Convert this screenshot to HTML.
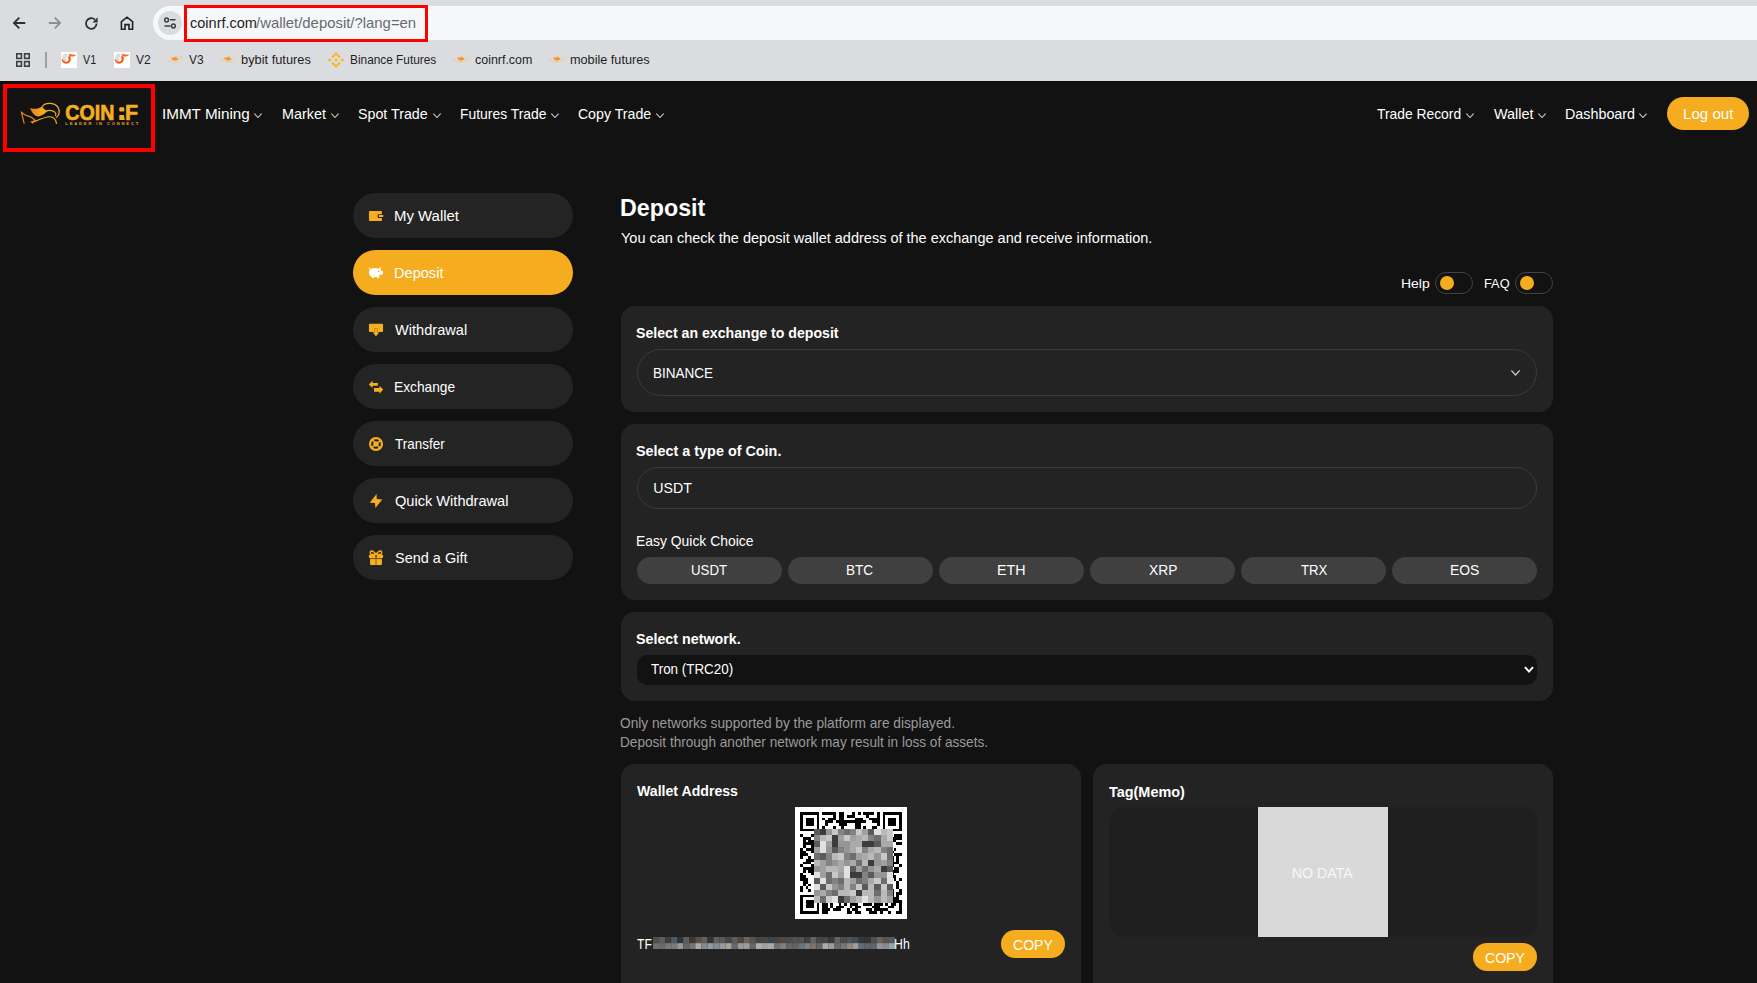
<!DOCTYPE html>
<html><head><meta charset="utf-8"><title>Deposit</title>
<style>
html,body{margin:0;padding:0;width:1757px;height:983px;overflow:hidden;background:#121212;}
body{position:relative;font-family:"Liberation Sans",sans-serif;}
.r{position:absolute;}
.t{position:absolute;white-space:nowrap;line-height:normal;transform-origin:0 0;}
svg{display:block}
</style></head><body>
<div class="r" style="left:0px;top:0px;width:1757px;height:81px;background:#dadce0;border-radius:0px;"></div>
<div class="r" style="left:0px;top:81px;width:1757px;height:1px;background:#0a0a0a;border-radius:0px;"></div>
<div class="r" style="left:153px;top:6px;width:1640px;height:34px;background:#f6f7f9;border-radius:17px;"></div>
<div class="r" style="left:158px;top:11px;width:24px;height:24px;background:#dadce0;border-radius:12px;"></div>
<svg class="r" style="left:158px;top:11px;" width="24" height="24" viewBox="0 0 24 24"><g fill="none" stroke="#3c4043" stroke-width="1.5"><circle cx="8.6" cy="9" r="1.9"/><circle cx="15.4" cy="15" r="1.9"/><path d="M12 8.7h5.5M6.5 15h6"/></g></svg>
<svg class="r" style="left:12px;top:16px;" width="14" height="14" viewBox="0 0 14 14"><path d="M13.3 7H2.2M7.3 1.6L1.9 7l5.4 5.4" fill="none" stroke="#2d3034" stroke-width="1.8"/></svg>
<svg class="r" style="left:48px;top:16px;" width="14" height="14" viewBox="0 0 14 14"><path d="M0.8 7H11.9M6.8 1.6L12.2 7l-5.4 5.4" fill="none" stroke="#8b8e93" stroke-width="1.8"/></svg>
<svg class="r" style="left:84px;top:16px;" width="15" height="15" viewBox="0 0 15 15"><path d="M12.6 7.6A5.3 5.3 0 1 1 10.9 3.6" fill="none" stroke="#2d3034" stroke-width="1.8"/><path d="M13.6 1.2V6.4H8.4z" fill="#2d3034"/></svg>
<svg class="r" style="left:120px;top:16px;" width="14" height="14" viewBox="0 0 14 14"><path d="M1.4 13.2V5.6L7 1.2l5.6 4.4v7.6H9V8.6H5v4.6z" fill="none" stroke="#202124" stroke-width="1.6" stroke-linejoin="miter"/></svg>
<div class="r" style="left:184px;top:5px;width:244px;height:37px;border:3.5px solid #ff0000;box-sizing:border-box"></div>
<div class="t" style="left:189.92px;top:15.00px;font-size:14.6px;color:#1f1f1f;transform:scaleX(0.9947);">coinrf.com</div>
<div class="t" style="left:256.30px;top:15.00px;font-size:14.6px;color:#676b70;transform:scaleX(1.0200);">/wallet/deposit/?lang=en</div>
<svg class="r" style="left:16px;top:53px;" width="14" height="14" viewBox="0 0 14 14"><g fill="none" stroke="#3c4043" stroke-width="1.6"><rect x="0.8" y="0.8" width="4.6" height="4.6"/><rect x="8.6" y="0.8" width="4.6" height="4.6"/><rect x="0.8" y="8.6" width="4.6" height="4.6"/><rect x="8.6" y="8.6" width="4.6" height="4.6"/></g></svg>
<div class="r" style="left:45px;top:52px;width:2px;height:16px;background:#9aa0a6;border-radius:0px;"></div>
<svg class="r" style="left:61px;top:52px;" width="16" height="16" viewBox="0 0 16 16"><rect width="16" height="16" fill="#fff"/><path d="M1.6 7.2A3.6 3.6 0 1 0 7.6 4.4" fill="none" stroke="#ff5214" stroke-width="2.1"/><path d="M4.6 1.2C2.4 1.6 1.2 3.6 1.4 6.2C1.8 8.6 3.6 9.8 5.6 9.2C4.6 8 4.2 6 6.4 4.2C6.6 2.6 5.8 1.4 4.6 1.2z" fill="#dcdcdc"/><path d="M7.4 1.8C9.6 2.2 11.6 3.4 15.2 2.4C14 4.4 11.6 5 8.6 4.4z" fill="#ff6414"/></svg>
<div class="t" style="left:82.75px;top:52.00px;font-size:13px;color:#1f1f1f;transform:scaleX(0.8284);">V1</div>
<svg class="r" style="left:114px;top:52px;" width="16" height="16" viewBox="0 0 16 16"><rect width="16" height="16" fill="#fff"/><path d="M1.6 7.2A3.6 3.6 0 1 0 7.6 4.4" fill="none" stroke="#ff5214" stroke-width="2.1"/><path d="M4.6 1.2C2.4 1.6 1.2 3.6 1.4 6.2C1.8 8.6 3.6 9.8 5.6 9.2C4.6 8 4.2 6 6.4 4.2C6.6 2.6 5.8 1.4 4.6 1.2z" fill="#dcdcdc"/><path d="M7.4 1.8C9.6 2.2 11.6 3.4 15.2 2.4C14 4.4 11.6 5 8.6 4.4z" fill="#ff6414"/></svg>
<div class="t" style="left:135.74px;top:52.00px;font-size:13px;color:#1f1f1f;transform:scaleX(0.9244);">V2</div>
<svg class="r" style="left:166px;top:52px;" width="17" height="16" viewBox="0 0 17 16"><path d="M5 5.6C6.8 6 8.6 5.6 10 4.6C10.4 5.8 11.6 6.6 13 7C11.4 8.2 9.4 9 7.6 8.6C6.4 8.2 5.6 7 5 5.6z" fill="#f39a26"/><path d="M10 4.6C11.6 3.4 14.4 3.6 15.4 5C16.2 6.4 15.6 8.2 14.8 9M1.4 6.4L2.8 10.4M3 8.8C5 9.4 7 9.8 8.2 10.2C10 10 12 9.4 14.2 9.6" fill="none" stroke="#f3c98e" stroke-width="0.9"/></svg>
<div class="t" style="left:188.54px;top:52.00px;font-size:13px;color:#1f1f1f;transform:scaleX(0.9165);">V3</div>
<svg class="r" style="left:219px;top:52px;" width="17" height="16" viewBox="0 0 17 16"><path d="M5 5.6C6.8 6 8.6 5.6 10 4.6C10.4 5.8 11.6 6.6 13 7C11.4 8.2 9.4 9 7.6 8.6C6.4 8.2 5.6 7 5 5.6z" fill="#f39a26"/><path d="M10 4.6C11.6 3.4 14.4 3.6 15.4 5C16.2 6.4 15.6 8.2 14.8 9M1.4 6.4L2.8 10.4M3 8.8C5 9.4 7 9.8 8.2 10.2C10 10 12 9.4 14.2 9.6" fill="none" stroke="#f3c98e" stroke-width="0.9"/></svg>
<div class="t" style="left:241.37px;top:52.00px;font-size:13px;color:#1f1f1f;transform:scaleX(0.9858);">bybit futures</div>
<svg class="r" style="left:322px;top:48px;" width="28" height="24" viewBox="0 0 1147 983"><g fill="#f5bb22"><path d="M575 160L770 355L705 420L575 290L445 420L380 355Z"/><path d="M575 820L770 625L705 560L575 690L445 560L380 625Z"/><path d="M310 415L385 490L310 565L235 490Z"/><path d="M575 415L650 490L575 565L500 490Z"/><path d="M835 415L910 490L835 565L760 490Z"/></g></svg>
<div class="t" style="left:349.65px;top:52.00px;font-size:13px;color:#1f1f1f;transform:scaleX(0.9115);">Binance Futures</div>
<svg class="r" style="left:452px;top:52px;" width="17" height="16" viewBox="0 0 17 16"><path d="M5 5.6C6.8 6 8.6 5.6 10 4.6C10.4 5.8 11.6 6.6 13 7C11.4 8.2 9.4 9 7.6 8.6C6.4 8.2 5.6 7 5 5.6z" fill="#f39a26"/><path d="M10 4.6C11.6 3.4 14.4 3.6 15.4 5C16.2 6.4 15.6 8.2 14.8 9M1.4 6.4L2.8 10.4M3 8.8C5 9.4 7 9.8 8.2 10.2C10 10 12 9.4 14.2 9.6" fill="none" stroke="#f3c98e" stroke-width="0.9"/></svg>
<div class="t" style="left:474.90px;top:52.00px;font-size:13px;color:#1f1f1f;transform:scaleX(0.9568);">coinrf.com</div>
<svg class="r" style="left:548px;top:52px;" width="17" height="16" viewBox="0 0 17 16"><path d="M5 5.6C6.8 6 8.6 5.6 10 4.6C10.4 5.8 11.6 6.6 13 7C11.4 8.2 9.4 9 7.6 8.6C6.4 8.2 5.6 7 5 5.6z" fill="#f39a26"/><path d="M10 4.6C11.6 3.4 14.4 3.6 15.4 5C16.2 6.4 15.6 8.2 14.8 9M1.4 6.4L2.8 10.4M3 8.8C5 9.4 7 9.8 8.2 10.2C10 10 12 9.4 14.2 9.6" fill="none" stroke="#f3c98e" stroke-width="0.9"/></svg>
<div class="t" style="left:570.38px;top:52.00px;font-size:13px;color:#1f1f1f;transform:scaleX(0.9746);">mobile futures</div>
<div class="r" style="left:3px;top:84px;width:152px;height:68px;border:4px solid #ff0000;box-sizing:border-box"></div>
<svg class="r" style="left:15px;top:98px;" width="60" height="32" viewBox="0 0 1757 937"><defs><linearGradient id="lg" x1="0" x2="1"><stop offset="0" stop-color="#ee7a28"/><stop offset="0.6" stop-color="#f3a522"/><stop offset="1" stop-color="#f5b01f"/></linearGradient></defs>
<path d="M440 290C560 340 690 320 800 240C820 300 870 355 960 380C870 450 760 560 640 535C560 510 490 420 440 290Z" fill="url(#lg)"/>
<path d="M800 250C850 170 950 150 1050 160C1250 180 1320 330 1290 450C1270 520 1230 560 1200 580" fill="none" stroke="#f2ac1e" stroke-width="38"/>
<path d="M900 390C1000 340 1150 370 1190 440C1200 470 1195 500 1185 525" fill="none" stroke="#f2ac1e" stroke-width="34"/>
<path d="M500 720C700 640 850 560 1000 550C1120 545 1200 620 1215 760" fill="none" stroke="#f2ac1e" stroke-width="34"/>
<path d="M270 750L190 420L300 500L470 560L600 660L480 700L540 740" fill="none" stroke="#ee8a25" stroke-width="34"/></svg>
<svg class="r" style="left:65px;top:101px;" width="75" height="26" viewBox="0 0 75 26"><g fill="#f5ae1f" stroke="#f5ae1f" stroke-width="0.7"><text x="0.3" y="18.8" font-family="Liberation Sans" font-weight="700" font-size="22.5" textLength="49" lengthAdjust="spacingAndGlyphs">COIN</text><text x="60" y="18.8" font-family="Liberation Sans" font-weight="700" font-size="22.5" textLength="13" lengthAdjust="spacingAndGlyphs">F</text></g><rect x="54.3" y="6.3" width="5" height="4.2" rx="1.2" fill="#f5ae1f"/><path d="M54.3 14h4.5l1 5h-5.5z" fill="#f5ae1f"/><text x="0.3" y="24.2" font-family="Liberation Sans" font-weight="700" font-size="4.2" fill="#e9a61f" textLength="73" lengthAdjust="spacing">LEADER IN CONNECT</text></svg>
<div class="t" style="left:162.13px;top:105.90px;font-size:14.2px;color:#fff;transform:scaleX(1.0742);">IMMT Mining</div>
<svg class="r" style="left:254px;top:112.8px;" width="8" height="5.5" viewBox="0 0 8 5.5"><path d="M0.4 0.5L4.0 4.5L7.6 0.5" fill="none" stroke="#c8c8c8" stroke-width="1.1"/></svg>
<div class="t" style="left:281.85px;top:105.90px;font-size:14.2px;color:#fff;transform:scaleX(1.0125);">Market</div>
<svg class="r" style="left:331px;top:112.8px;" width="8" height="5.5" viewBox="0 0 8 5.5"><path d="M0.4 0.5L4.0 4.5L7.6 0.5" fill="none" stroke="#c8c8c8" stroke-width="1.1"/></svg>
<div class="t" style="left:358.36px;top:105.90px;font-size:14.2px;color:#fff;transform:scaleX(1.0035);">Spot Trade</div>
<svg class="r" style="left:433px;top:112.8px;" width="8" height="5.5" viewBox="0 0 8 5.5"><path d="M0.4 0.5L4.0 4.5L7.6 0.5" fill="none" stroke="#c8c8c8" stroke-width="1.1"/></svg>
<div class="t" style="left:459.89px;top:105.90px;font-size:14.2px;color:#fff;transform:scaleX(0.9790);">Futures Trade</div>
<svg class="r" style="left:551px;top:112.8px;" width="8" height="5.5" viewBox="0 0 8 5.5"><path d="M0.4 0.5L4.0 4.5L7.6 0.5" fill="none" stroke="#c8c8c8" stroke-width="1.1"/></svg>
<div class="t" style="left:577.89px;top:105.90px;font-size:14.2px;color:#fff;">Copy Trade</div>
<svg class="r" style="left:656px;top:112.8px;" width="8" height="5.5" viewBox="0 0 8 5.5"><path d="M0.4 0.5L4.0 4.5L7.6 0.5" fill="none" stroke="#c8c8c8" stroke-width="1.1"/></svg>
<div class="t" style="left:1376.72px;top:105.90px;font-size:14.2px;color:#fff;transform:scaleX(0.9758);">Trade Record</div>
<svg class="r" style="left:1466px;top:112.8px;" width="8" height="5.5" viewBox="0 0 8 5.5"><path d="M0.4 0.5L4.0 4.5L7.6 0.5" fill="none" stroke="#c8c8c8" stroke-width="1.1"/></svg>
<div class="t" style="left:1493.53px;top:105.90px;font-size:14.2px;color:#fff;transform:scaleX(1.0164);">Wallet</div>
<svg class="r" style="left:1538px;top:112.8px;" width="8" height="5.5" viewBox="0 0 8 5.5"><path d="M0.4 0.5L4.0 4.5L7.6 0.5" fill="none" stroke="#c8c8c8" stroke-width="1.1"/></svg>
<div class="t" style="left:1564.85px;top:105.90px;font-size:14.2px;color:#fff;transform:scaleX(1.0092);">Dashboard</div>
<svg class="r" style="left:1639px;top:112.8px;" width="8" height="5.5" viewBox="0 0 8 5.5"><path d="M0.4 0.5L4.0 4.5L7.6 0.5" fill="none" stroke="#c8c8c8" stroke-width="1.1"/></svg>
<div class="r" style="left:1667px;top:97px;width:82px;height:33px;background:#f5ad1f;border-radius:16.5px;"></div>
<div class="t" style="left:1682.69px;top:105.90px;font-size:14.2px;color:#fff;transform:scaleX(1.0639);">Log out</div>
<div class="r" style="left:353px;top:193px;width:220px;height:45px;background:#242424;border-radius:22.5px;"></div>
<div class="t" style="left:394.11px;top:208.20px;font-size:14.3px;color:#fff;transform:scaleX(1.0444);">My Wallet</div>
<div class="r" style="left:353px;top:250px;width:220px;height:45px;background:#f5ad1f;border-radius:22.5px;"></div>
<div class="t" style="left:394.13px;top:265.20px;font-size:14.3px;color:#fff;transform:scaleX(1.0199);">Deposit</div>
<div class="r" style="left:353px;top:307px;width:220px;height:45px;background:#242424;border-radius:22.5px;"></div>
<div class="t" style="left:395.23px;top:322.20px;font-size:14.3px;color:#fff;transform:scaleX(1.0199);">Withdrawal</div>
<div class="r" style="left:353px;top:364px;width:220px;height:45px;background:#242424;border-radius:22.5px;"></div>
<div class="t" style="left:394.20px;top:379.20px;font-size:14.3px;color:#fff;transform:scaleX(0.9615);">Exchange</div>
<div class="r" style="left:353px;top:421px;width:220px;height:45px;background:#242424;border-radius:22.5px;"></div>
<div class="t" style="left:395.03px;top:436.20px;font-size:14.3px;color:#fff;transform:scaleX(0.9426);">Transfer</div>
<div class="r" style="left:353px;top:478px;width:220px;height:45px;background:#242424;border-radius:22.5px;"></div>
<div class="t" style="left:394.64px;top:493.20px;font-size:14.3px;color:#fff;transform:scaleX(1.0202);">Quick Withdrawal</div>
<div class="r" style="left:353px;top:535px;width:220px;height:45px;background:#242424;border-radius:22.5px;"></div>
<div class="t" style="left:394.65px;top:550.20px;font-size:14.3px;color:#fff;transform:scaleX(1.0129);">Send a Gift</div>
<svg class="r" style="left:362px;top:205px;" width="28" height="22" viewBox="0 0 1251 983"><rect x="310" y="265" width="580" height="450" rx="40" fill="#f5ae1f"/><rect x="700" y="410" width="260" height="170" rx="40" fill="#242424"/><rect x="750" y="450" width="200" height="90" rx="20" fill="#f5ae1f"/></svg>
<svg class="r" style="left:362px;top:262px;" width="28" height="22" viewBox="0 0 1251 983"><g fill="#fff"><ellipse cx="565" cy="480" rx="255" ry="215"/><path d="M700 300L845 240L835 400L740 420Z"/><rect x="790" y="390" width="150" height="180" rx="55"/><path d="M410 600L545 620L530 720L455 715Z"/><path d="M650 610L775 590L760 740L690 720Z"/><path d="M315 265C345 245 375 290 370 350C335 355 300 315 315 265Z"/></g><path d="M545 690C590 670 640 670 680 690L680 760L545 760Z" fill="#f5ad1f"/><circle cx="735" cy="425" r="36" fill="#f5ad1f"/></svg>
<svg class="r" style="left:362px;top:319px;" width="28" height="22" viewBox="0 0 1251 983"><rect x="310" y="210" width="630" height="370" rx="40" fill="#f5ae1f"/><path d="M560 440h130v160h75L625 770 485 600h75z" fill="#f5ae1f" stroke="#5a4519" stroke-width="28" paint-order="stroke"/></svg>
<svg class="r" style="left:362px;top:376px;" width="28" height="22" viewBox="0 0 1251 983"><path d="M305 375L470 215V310H710V440H470V540z" fill="#f5ae1f"/><path d="M945 600L785 440V540H535V700H785V790z" fill="#f5ae1f" stroke="#242424" stroke-width="30" paint-order="stroke"/></svg>
<svg class="r" style="left:362px;top:433px;" width="28" height="22" viewBox="0 0 1251 983"><circle cx="625" cy="490" r="315" fill="#f5ae1f"/><circle cx="625" cy="490" r="170" fill="none" stroke="#242424" stroke-width="90" stroke-dasharray="200 67" stroke-dashoffset="100"/></svg>
<svg class="r" style="left:362px;top:490px;" width="28" height="22" viewBox="0 0 1251 983"><path d="M650 175L345 565L580 585L600 800L905 420L660 400z" fill="#f5ae1f" stroke-linejoin="round"/></svg>
<svg class="r" style="left:362px;top:547px;" width="28" height="22" viewBox="0 0 1251 983"><path d="M625 330C560 240 500 180 430 180C370 180 350 250 390 300C420 335 500 340 625 330C750 340 830 335 860 300C900 250 880 180 820 180C750 180 690 240 625 330Z" fill="none" stroke="#f5ae1f" stroke-width="60"/><rect x="310" y="340" width="630" height="160" rx="40" fill="#f5ae1f"/><rect x="360" y="530" width="530" height="275" rx="30" fill="#f5ae1f"/><rect x="600" y="360" width="55" height="110" fill="#242424"/><rect x="595" y="500" width="62" height="305" fill="#8a6a25" opacity="0.7"/><rect x="360" y="500" width="530" height="40" fill="#6b5527" opacity="0.8"/></svg>
<div class="t" style="left:619.99px;top:194.30px;font-size:24.5px;color:#fff;font-weight:700;transform:scaleX(0.9493);">Deposit</div>
<div class="t" style="left:620.64px;top:229.40px;font-size:15.2px;color:#fff;transform:scaleX(0.9544);">You can check the deposit wallet address of the exchange and receive information.</div>
<div class="t" style="left:1400.58px;top:276.00px;font-size:13px;color:#fff;transform:scaleX(1.0733);">Help</div>
<div class="r" style="left:1435px;top:272px;width:38px;height:21.5px;background:transparent;border-radius:11px;border:1px solid #424242;box-sizing:border-box"></div>
<div class="r" style="left:1439.5px;top:275.8px;width:14.5px;height:14.5px;background:#f5ad1f;border-radius:7.25px;"></div>
<div class="t" style="left:1483.98px;top:276.00px;font-size:13px;color:#fff;transform:scaleX(0.9846);">FAQ</div>
<div class="r" style="left:1515px;top:272px;width:38px;height:21.5px;background:transparent;border-radius:11px;border:1px solid #424242;box-sizing:border-box"></div>
<div class="r" style="left:1519.5px;top:275.8px;width:14.5px;height:14.5px;background:#f5ad1f;border-radius:7.25px;"></div>
<div class="r" style="left:621px;top:306px;width:932px;height:106px;background:#232323;border-radius:14px;"></div>
<div class="t" style="left:636.48px;top:325.20px;font-size:14.8px;color:#fff;font-weight:700;transform:scaleX(0.9548);">Select an exchange to deposit</div>
<div class="r" style="left:637px;top:349px;width:900px;height:47px;background:transparent;border-radius:23.5px;border:1px solid #3a3a3a;box-sizing:border-box"></div>
<div class="t" style="left:653.32px;top:365.90px;font-size:13.8px;color:#fff;transform:scaleX(0.9801);">BINANCE</div>
<svg class="r" style="left:1511px;top:369.9px;" width="9" height="6" viewBox="0 0 9 6"><path d="M0.4 0.5L4.5 5L8.6 0.5" fill="none" stroke="#c8c8c8" stroke-width="1.2"/></svg>
<div class="r" style="left:621px;top:424px;width:932px;height:176px;background:#232323;border-radius:14px;"></div>
<div class="t" style="left:636.07px;top:443.30px;font-size:14.8px;color:#fff;font-weight:700;transform:scaleX(0.9715);">Select a type of Coin.</div>
<div class="r" style="left:637px;top:467px;width:900px;height:42px;background:transparent;border-radius:21px;border:1px solid #3a3a3a;box-sizing:border-box"></div>
<div class="t" style="left:653.34px;top:479.90px;font-size:14.2px;color:#fff;">USDT</div>
<div class="t" style="left:636.49px;top:532.90px;font-size:14.3px;color:#fff;transform:scaleX(0.9725);">Easy Quick Choice</div>
<div class="r" style="left:637px;top:557px;width:145px;height:27px;background:#404040;border-radius:13.5px;"></div>
<div class="t" style="left:691.21px;top:562.30px;font-size:14.6px;color:#fff;transform:scaleX(0.9080);">USDT</div>
<div class="r" style="left:788px;top:557px;width:145px;height:27px;background:#404040;border-radius:13.5px;"></div>
<div class="t" style="left:846.41px;top:562.30px;font-size:14.6px;color:#fff;transform:scaleX(0.9302);">BTC</div>
<div class="r" style="left:939px;top:557px;width:145px;height:27px;background:#404040;border-radius:13.5px;"></div>
<div class="t" style="left:997.06px;top:562.30px;font-size:14.6px;color:#fff;transform:scaleX(0.9790);">ETH</div>
<div class="r" style="left:1090px;top:557px;width:145px;height:27px;background:#404040;border-radius:13.5px;"></div>
<div class="t" style="left:1148.56px;top:562.30px;font-size:14.6px;color:#fff;transform:scaleX(0.9444);">XRP</div>
<div class="r" style="left:1241px;top:557px;width:145px;height:27px;background:#404040;border-radius:13.5px;"></div>
<div class="t" style="left:1300.54px;top:562.30px;font-size:14.6px;color:#fff;transform:scaleX(0.9051);">TRX</div>
<div class="r" style="left:1392px;top:557px;width:145px;height:27px;background:#404040;border-radius:13.5px;"></div>
<div class="t" style="left:1449.69px;top:562.30px;font-size:14.6px;color:#fff;transform:scaleX(0.9523);">EOS</div>
<div class="r" style="left:621px;top:612px;width:932px;height:89px;background:#232323;border-radius:14px;"></div>
<div class="t" style="left:636.07px;top:631.20px;font-size:14.8px;color:#fff;font-weight:700;transform:scaleX(0.9641);">Select network.</div>
<div class="r" style="left:637px;top:655px;width:900px;height:30px;background:#121212;border-radius:10px;"></div>
<div class="t" style="left:651.03px;top:661.30px;font-size:14.3px;color:#fff;transform:scaleX(0.9374);">Tron (TRC20)</div>
<svg class="r" style="left:1524px;top:666px;" width="10" height="8" viewBox="0 0 10 8"><path d="M1 1.2L5 5.6L9 1.2" fill="none" stroke="#fff" stroke-width="2"/></svg>
<div class="t" style="left:620.38px;top:715.20px;font-size:14.2px;color:#9a9a9a;transform:scaleX(0.9654);">Only networks supported by the platform are displayed.</div>
<div class="t" style="left:619.91px;top:734.00px;font-size:14.2px;color:#9a9a9a;transform:scaleX(0.9583);">Deposit through another network may result in loss of assets.</div>
<div class="r" style="left:621px;top:764px;width:460px;height:240px;background:#232323;border-radius:14px;"></div>
<div class="t" style="left:637.00px;top:783.00px;font-size:14.8px;color:#fff;font-weight:700;transform:scaleX(0.9541);">Wallet Address</div>
<svg class="r" style="left:795px;top:807px;" width="112" height="112" viewBox="0 0 112 112"><rect width="112" height="112" fill="#fff"/><g transform="translate(5,5) scale(2.75)" fill="#000" shape-rendering="crispEdges"><rect x="0" y="0" width="1" height="1"/><rect x="1" y="0" width="1" height="1"/><rect x="2" y="0" width="1" height="1"/><rect x="3" y="0" width="1" height="1"/><rect x="4" y="0" width="1" height="1"/><rect x="5" y="0" width="1" height="1"/><rect x="6" y="0" width="1" height="1"/><rect x="8" y="0" width="1" height="1"/><rect x="9" y="0" width="1" height="1"/><rect x="10" y="0" width="1" height="1"/><rect x="11" y="0" width="1" height="1"/><rect x="12" y="0" width="1" height="1"/><rect x="14" y="0" width="1" height="1"/><rect x="15" y="0" width="1" height="1"/><rect x="19" y="0" width="1" height="1"/><rect x="21" y="0" width="1" height="1"/><rect x="23" y="0" width="1" height="1"/><rect x="24" y="0" width="1" height="1"/><rect x="25" y="0" width="1" height="1"/><rect x="26" y="0" width="1" height="1"/><rect x="28" y="0" width="1" height="1"/><rect x="30" y="0" width="1" height="1"/><rect x="31" y="0" width="1" height="1"/><rect x="32" y="0" width="1" height="1"/><rect x="33" y="0" width="1" height="1"/><rect x="34" y="0" width="1" height="1"/><rect x="35" y="0" width="1" height="1"/><rect x="36" y="0" width="1" height="1"/><rect x="0" y="1" width="1" height="1"/><rect x="6" y="1" width="1" height="1"/><rect x="12" y="1" width="1" height="1"/><rect x="14" y="1" width="1" height="1"/><rect x="15" y="1" width="1" height="1"/><rect x="17" y="1" width="1" height="1"/><rect x="18" y="1" width="1" height="1"/><rect x="19" y="1" width="1" height="1"/><rect x="24" y="1" width="1" height="1"/><rect x="28" y="1" width="1" height="1"/><rect x="30" y="1" width="1" height="1"/><rect x="36" y="1" width="1" height="1"/><rect x="0" y="2" width="1" height="1"/><rect x="2" y="2" width="1" height="1"/><rect x="3" y="2" width="1" height="1"/><rect x="4" y="2" width="1" height="1"/><rect x="6" y="2" width="1" height="1"/><rect x="8" y="2" width="1" height="1"/><rect x="10" y="2" width="1" height="1"/><rect x="11" y="2" width="1" height="1"/><rect x="12" y="2" width="1" height="1"/><rect x="14" y="2" width="1" height="1"/><rect x="15" y="2" width="1" height="1"/><rect x="20" y="2" width="1" height="1"/><rect x="21" y="2" width="1" height="1"/><rect x="22" y="2" width="1" height="1"/><rect x="25" y="2" width="1" height="1"/><rect x="26" y="2" width="1" height="1"/><rect x="27" y="2" width="1" height="1"/><rect x="28" y="2" width="1" height="1"/><rect x="30" y="2" width="1" height="1"/><rect x="32" y="2" width="1" height="1"/><rect x="33" y="2" width="1" height="1"/><rect x="34" y="2" width="1" height="1"/><rect x="36" y="2" width="1" height="1"/><rect x="0" y="3" width="1" height="1"/><rect x="2" y="3" width="1" height="1"/><rect x="3" y="3" width="1" height="1"/><rect x="4" y="3" width="1" height="1"/><rect x="6" y="3" width="1" height="1"/><rect x="9" y="3" width="1" height="1"/><rect x="10" y="3" width="1" height="1"/><rect x="11" y="3" width="1" height="1"/><rect x="13" y="3" width="1" height="1"/><rect x="14" y="3" width="1" height="1"/><rect x="15" y="3" width="1" height="1"/><rect x="16" y="3" width="1" height="1"/><rect x="17" y="3" width="1" height="1"/><rect x="18" y="3" width="1" height="1"/><rect x="19" y="3" width="1" height="1"/><rect x="20" y="3" width="1" height="1"/><rect x="21" y="3" width="1" height="1"/><rect x="22" y="3" width="1" height="1"/><rect x="23" y="3" width="1" height="1"/><rect x="26" y="3" width="1" height="1"/><rect x="27" y="3" width="1" height="1"/><rect x="28" y="3" width="1" height="1"/><rect x="30" y="3" width="1" height="1"/><rect x="32" y="3" width="1" height="1"/><rect x="33" y="3" width="1" height="1"/><rect x="34" y="3" width="1" height="1"/><rect x="36" y="3" width="1" height="1"/><rect x="0" y="4" width="1" height="1"/><rect x="2" y="4" width="1" height="1"/><rect x="3" y="4" width="1" height="1"/><rect x="4" y="4" width="1" height="1"/><rect x="6" y="4" width="1" height="1"/><rect x="9" y="4" width="1" height="1"/><rect x="14" y="4" width="1" height="1"/><rect x="15" y="4" width="1" height="1"/><rect x="16" y="4" width="1" height="1"/><rect x="20" y="4" width="1" height="1"/><rect x="21" y="4" width="1" height="1"/><rect x="28" y="4" width="1" height="1"/><rect x="30" y="4" width="1" height="1"/><rect x="32" y="4" width="1" height="1"/><rect x="33" y="4" width="1" height="1"/><rect x="34" y="4" width="1" height="1"/><rect x="36" y="4" width="1" height="1"/><rect x="0" y="5" width="1" height="1"/><rect x="6" y="5" width="1" height="1"/><rect x="8" y="5" width="1" height="1"/><rect x="12" y="5" width="1" height="1"/><rect x="15" y="5" width="1" height="1"/><rect x="20" y="5" width="1" height="1"/><rect x="21" y="5" width="1" height="1"/><rect x="23" y="5" width="1" height="1"/><rect x="26" y="5" width="1" height="1"/><rect x="27" y="5" width="1" height="1"/><rect x="30" y="5" width="1" height="1"/><rect x="36" y="5" width="1" height="1"/><rect x="0" y="6" width="1" height="1"/><rect x="1" y="6" width="1" height="1"/><rect x="2" y="6" width="1" height="1"/><rect x="3" y="6" width="1" height="1"/><rect x="4" y="6" width="1" height="1"/><rect x="5" y="6" width="1" height="1"/><rect x="6" y="6" width="1" height="1"/><rect x="10" y="6" width="1" height="1"/><rect x="13" y="6" width="1" height="1"/><rect x="14" y="6" width="1" height="1"/><rect x="15" y="6" width="1" height="1"/><rect x="16" y="6" width="1" height="1"/><rect x="18" y="6" width="1" height="1"/><rect x="19" y="6" width="1" height="1"/><rect x="20" y="6" width="1" height="1"/><rect x="22" y="6" width="1" height="1"/><rect x="23" y="6" width="1" height="1"/><rect x="26" y="6" width="1" height="1"/><rect x="30" y="6" width="1" height="1"/><rect x="31" y="6" width="1" height="1"/><rect x="32" y="6" width="1" height="1"/><rect x="33" y="6" width="1" height="1"/><rect x="34" y="6" width="1" height="1"/><rect x="35" y="6" width="1" height="1"/><rect x="36" y="6" width="1" height="1"/><rect x="9" y="7" width="1" height="1"/><rect x="10" y="7" width="1" height="1"/><rect x="16" y="7" width="1" height="1"/><rect x="21" y="7" width="1" height="1"/><rect x="23" y="7" width="1" height="1"/><rect x="28" y="7" width="1" height="1"/><rect x="0" y="8" width="1" height="1"/><rect x="4" y="8" width="1" height="1"/><rect x="7" y="8" width="1" height="1"/><rect x="10" y="8" width="1" height="1"/><rect x="12" y="8" width="1" height="1"/><rect x="13" y="8" width="1" height="1"/><rect x="16" y="8" width="1" height="1"/><rect x="17" y="8" width="1" height="1"/><rect x="19" y="8" width="1" height="1"/><rect x="20" y="8" width="1" height="1"/><rect x="21" y="8" width="1" height="1"/><rect x="23" y="8" width="1" height="1"/><rect x="25" y="8" width="1" height="1"/><rect x="26" y="8" width="1" height="1"/><rect x="27" y="8" width="1" height="1"/><rect x="30" y="8" width="1" height="1"/><rect x="34" y="8" width="1" height="1"/><rect x="35" y="8" width="1" height="1"/><rect x="36" y="8" width="1" height="1"/><rect x="1" y="9" width="1" height="1"/><rect x="2" y="9" width="1" height="1"/><rect x="3" y="9" width="1" height="1"/><rect x="6" y="9" width="1" height="1"/><rect x="7" y="9" width="1" height="1"/><rect x="11" y="9" width="1" height="1"/><rect x="12" y="9" width="1" height="1"/><rect x="14" y="9" width="1" height="1"/><rect x="15" y="9" width="1" height="1"/><rect x="19" y="9" width="1" height="1"/><rect x="21" y="9" width="1" height="1"/><rect x="23" y="9" width="1" height="1"/><rect x="24" y="9" width="1" height="1"/><rect x="27" y="9" width="1" height="1"/><rect x="28" y="9" width="1" height="1"/><rect x="30" y="9" width="1" height="1"/><rect x="31" y="9" width="1" height="1"/><rect x="32" y="9" width="1" height="1"/><rect x="33" y="9" width="1" height="1"/><rect x="34" y="9" width="1" height="1"/><rect x="35" y="9" width="1" height="1"/><rect x="36" y="9" width="1" height="1"/><rect x="1" y="10" width="1" height="1"/><rect x="3" y="10" width="1" height="1"/><rect x="4" y="10" width="1" height="1"/><rect x="5" y="10" width="1" height="1"/><rect x="6" y="10" width="1" height="1"/><rect x="7" y="10" width="1" height="1"/><rect x="10" y="10" width="1" height="1"/><rect x="11" y="10" width="1" height="1"/><rect x="13" y="10" width="1" height="1"/><rect x="15" y="10" width="1" height="1"/><rect x="16" y="10" width="1" height="1"/><rect x="18" y="10" width="1" height="1"/><rect x="22" y="10" width="1" height="1"/><rect x="26" y="10" width="1" height="1"/><rect x="27" y="10" width="1" height="1"/><rect x="28" y="10" width="1" height="1"/><rect x="29" y="10" width="1" height="1"/><rect x="30" y="10" width="1" height="1"/><rect x="32" y="10" width="1" height="1"/><rect x="33" y="10" width="1" height="1"/><rect x="34" y="10" width="1" height="1"/><rect x="1" y="11" width="1" height="1"/><rect x="2" y="11" width="1" height="1"/><rect x="3" y="11" width="1" height="1"/><rect x="4" y="11" width="1" height="1"/><rect x="5" y="11" width="1" height="1"/><rect x="6" y="11" width="1" height="1"/><rect x="7" y="11" width="1" height="1"/><rect x="11" y="11" width="1" height="1"/><rect x="13" y="11" width="1" height="1"/><rect x="14" y="11" width="1" height="1"/><rect x="15" y="11" width="1" height="1"/><rect x="16" y="11" width="1" height="1"/><rect x="17" y="11" width="1" height="1"/><rect x="19" y="11" width="1" height="1"/><rect x="21" y="11" width="1" height="1"/><rect x="22" y="11" width="1" height="1"/><rect x="23" y="11" width="1" height="1"/><rect x="24" y="11" width="1" height="1"/><rect x="25" y="11" width="1" height="1"/><rect x="26" y="11" width="1" height="1"/><rect x="27" y="11" width="1" height="1"/><rect x="28" y="11" width="1" height="1"/><rect x="35" y="11" width="1" height="1"/><rect x="36" y="11" width="1" height="1"/><rect x="1" y="12" width="1" height="1"/><rect x="4" y="12" width="1" height="1"/><rect x="10" y="12" width="1" height="1"/><rect x="20" y="12" width="1" height="1"/><rect x="21" y="12" width="1" height="1"/><rect x="22" y="12" width="1" height="1"/><rect x="23" y="12" width="1" height="1"/><rect x="24" y="12" width="1" height="1"/><rect x="30" y="12" width="1" height="1"/><rect x="31" y="12" width="1" height="1"/><rect x="0" y="13" width="1" height="1"/><rect x="2" y="13" width="1" height="1"/><rect x="3" y="13" width="1" height="1"/><rect x="4" y="13" width="1" height="1"/><rect x="6" y="13" width="1" height="1"/><rect x="9" y="13" width="1" height="1"/><rect x="10" y="13" width="1" height="1"/><rect x="11" y="13" width="1" height="1"/><rect x="16" y="13" width="1" height="1"/><rect x="17" y="13" width="1" height="1"/><rect x="18" y="13" width="1" height="1"/><rect x="20" y="13" width="1" height="1"/><rect x="22" y="13" width="1" height="1"/><rect x="23" y="13" width="1" height="1"/><rect x="24" y="13" width="1" height="1"/><rect x="28" y="13" width="1" height="1"/><rect x="30" y="13" width="1" height="1"/><rect x="31" y="13" width="1" height="1"/><rect x="32" y="13" width="1" height="1"/><rect x="34" y="13" width="1" height="1"/><rect x="0" y="14" width="1" height="1"/><rect x="1" y="14" width="1" height="1"/><rect x="4" y="14" width="1" height="1"/><rect x="5" y="14" width="1" height="1"/><rect x="6" y="14" width="1" height="1"/><rect x="8" y="14" width="1" height="1"/><rect x="10" y="14" width="1" height="1"/><rect x="13" y="14" width="1" height="1"/><rect x="18" y="14" width="1" height="1"/><rect x="20" y="14" width="1" height="1"/><rect x="21" y="14" width="1" height="1"/><rect x="22" y="14" width="1" height="1"/><rect x="23" y="14" width="1" height="1"/><rect x="24" y="14" width="1" height="1"/><rect x="25" y="14" width="1" height="1"/><rect x="26" y="14" width="1" height="1"/><rect x="27" y="14" width="1" height="1"/><rect x="28" y="14" width="1" height="1"/><rect x="30" y="14" width="1" height="1"/><rect x="33" y="14" width="1" height="1"/><rect x="0" y="15" width="1" height="1"/><rect x="1" y="15" width="1" height="1"/><rect x="2" y="15" width="1" height="1"/><rect x="5" y="15" width="1" height="1"/><rect x="6" y="15" width="1" height="1"/><rect x="7" y="15" width="1" height="1"/><rect x="8" y="15" width="1" height="1"/><rect x="9" y="15" width="1" height="1"/><rect x="11" y="15" width="1" height="1"/><rect x="13" y="15" width="1" height="1"/><rect x="14" y="15" width="1" height="1"/><rect x="16" y="15" width="1" height="1"/><rect x="17" y="15" width="1" height="1"/><rect x="26" y="15" width="1" height="1"/><rect x="28" y="15" width="1" height="1"/><rect x="31" y="15" width="1" height="1"/><rect x="32" y="15" width="1" height="1"/><rect x="34" y="15" width="1" height="1"/><rect x="35" y="15" width="1" height="1"/><rect x="36" y="15" width="1" height="1"/><rect x="0" y="16" width="1" height="1"/><rect x="3" y="16" width="1" height="1"/><rect x="5" y="16" width="1" height="1"/><rect x="7" y="16" width="1" height="1"/><rect x="8" y="16" width="1" height="1"/><rect x="9" y="16" width="1" height="1"/><rect x="10" y="16" width="1" height="1"/><rect x="12" y="16" width="1" height="1"/><rect x="13" y="16" width="1" height="1"/><rect x="16" y="16" width="1" height="1"/><rect x="17" y="16" width="1" height="1"/><rect x="18" y="16" width="1" height="1"/><rect x="19" y="16" width="1" height="1"/><rect x="20" y="16" width="1" height="1"/><rect x="21" y="16" width="1" height="1"/><rect x="22" y="16" width="1" height="1"/><rect x="23" y="16" width="1" height="1"/><rect x="27" y="16" width="1" height="1"/><rect x="28" y="16" width="1" height="1"/><rect x="30" y="16" width="1" height="1"/><rect x="31" y="16" width="1" height="1"/><rect x="32" y="16" width="1" height="1"/><rect x="33" y="16" width="1" height="1"/><rect x="35" y="16" width="1" height="1"/><rect x="2" y="17" width="1" height="1"/><rect x="3" y="17" width="1" height="1"/><rect x="4" y="17" width="1" height="1"/><rect x="5" y="17" width="1" height="1"/><rect x="6" y="17" width="1" height="1"/><rect x="10" y="17" width="1" height="1"/><rect x="11" y="17" width="1" height="1"/><rect x="14" y="17" width="1" height="1"/><rect x="16" y="17" width="1" height="1"/><rect x="17" y="17" width="1" height="1"/><rect x="22" y="17" width="1" height="1"/><rect x="23" y="17" width="1" height="1"/><rect x="24" y="17" width="1" height="1"/><rect x="31" y="17" width="1" height="1"/><rect x="33" y="17" width="1" height="1"/><rect x="35" y="17" width="1" height="1"/><rect x="1" y="18" width="1" height="1"/><rect x="2" y="18" width="1" height="1"/><rect x="3" y="18" width="1" height="1"/><rect x="6" y="18" width="1" height="1"/><rect x="7" y="18" width="1" height="1"/><rect x="10" y="18" width="1" height="1"/><rect x="11" y="18" width="1" height="1"/><rect x="13" y="18" width="1" height="1"/><rect x="14" y="18" width="1" height="1"/><rect x="15" y="18" width="1" height="1"/><rect x="19" y="18" width="1" height="1"/><rect x="20" y="18" width="1" height="1"/><rect x="21" y="18" width="1" height="1"/><rect x="24" y="18" width="1" height="1"/><rect x="25" y="18" width="1" height="1"/><rect x="26" y="18" width="1" height="1"/><rect x="28" y="18" width="1" height="1"/><rect x="29" y="18" width="1" height="1"/><rect x="32" y="18" width="1" height="1"/><rect x="33" y="18" width="1" height="1"/><rect x="34" y="18" width="1" height="1"/><rect x="35" y="18" width="1" height="1"/><rect x="0" y="19" width="1" height="1"/><rect x="4" y="19" width="1" height="1"/><rect x="6" y="19" width="1" height="1"/><rect x="8" y="19" width="1" height="1"/><rect x="9" y="19" width="1" height="1"/><rect x="11" y="19" width="1" height="1"/><rect x="13" y="19" width="1" height="1"/><rect x="14" y="19" width="1" height="1"/><rect x="15" y="19" width="1" height="1"/><rect x="16" y="19" width="1" height="1"/><rect x="19" y="19" width="1" height="1"/><rect x="20" y="19" width="1" height="1"/><rect x="21" y="19" width="1" height="1"/><rect x="23" y="19" width="1" height="1"/><rect x="24" y="19" width="1" height="1"/><rect x="25" y="19" width="1" height="1"/><rect x="26" y="19" width="1" height="1"/><rect x="32" y="19" width="1" height="1"/><rect x="33" y="19" width="1" height="1"/><rect x="36" y="19" width="1" height="1"/><rect x="1" y="20" width="1" height="1"/><rect x="2" y="20" width="1" height="1"/><rect x="3" y="20" width="1" height="1"/><rect x="4" y="20" width="1" height="1"/><rect x="5" y="20" width="1" height="1"/><rect x="6" y="20" width="1" height="1"/><rect x="7" y="20" width="1" height="1"/><rect x="9" y="20" width="1" height="1"/><rect x="11" y="20" width="1" height="1"/><rect x="12" y="20" width="1" height="1"/><rect x="15" y="20" width="1" height="1"/><rect x="16" y="20" width="1" height="1"/><rect x="17" y="20" width="1" height="1"/><rect x="18" y="20" width="1" height="1"/><rect x="20" y="20" width="1" height="1"/><rect x="21" y="20" width="1" height="1"/><rect x="23" y="20" width="1" height="1"/><rect x="24" y="20" width="1" height="1"/><rect x="27" y="20" width="1" height="1"/><rect x="28" y="20" width="1" height="1"/><rect x="29" y="20" width="1" height="1"/><rect x="31" y="20" width="1" height="1"/><rect x="34" y="20" width="1" height="1"/><rect x="35" y="20" width="1" height="1"/><rect x="1" y="21" width="1" height="1"/><rect x="3" y="21" width="1" height="1"/><rect x="4" y="21" width="1" height="1"/><rect x="5" y="21" width="1" height="1"/><rect x="10" y="21" width="1" height="1"/><rect x="11" y="21" width="1" height="1"/><rect x="12" y="21" width="1" height="1"/><rect x="15" y="21" width="1" height="1"/><rect x="16" y="21" width="1" height="1"/><rect x="17" y="21" width="1" height="1"/><rect x="18" y="21" width="1" height="1"/><rect x="20" y="21" width="1" height="1"/><rect x="26" y="21" width="1" height="1"/><rect x="27" y="21" width="1" height="1"/><rect x="28" y="21" width="1" height="1"/><rect x="30" y="21" width="1" height="1"/><rect x="31" y="21" width="1" height="1"/><rect x="33" y="21" width="1" height="1"/><rect x="34" y="21" width="1" height="1"/><rect x="35" y="21" width="1" height="1"/><rect x="0" y="22" width="1" height="1"/><rect x="4" y="22" width="1" height="1"/><rect x="5" y="22" width="1" height="1"/><rect x="6" y="22" width="1" height="1"/><rect x="7" y="22" width="1" height="1"/><rect x="9" y="22" width="1" height="1"/><rect x="10" y="22" width="1" height="1"/><rect x="11" y="22" width="1" height="1"/><rect x="17" y="22" width="1" height="1"/><rect x="19" y="22" width="1" height="1"/><rect x="21" y="22" width="1" height="1"/><rect x="23" y="22" width="1" height="1"/><rect x="24" y="22" width="1" height="1"/><rect x="25" y="22" width="1" height="1"/><rect x="26" y="22" width="1" height="1"/><rect x="29" y="22" width="1" height="1"/><rect x="30" y="22" width="1" height="1"/><rect x="33" y="22" width="1" height="1"/><rect x="0" y="23" width="1" height="1"/><rect x="1" y="23" width="1" height="1"/><rect x="5" y="23" width="1" height="1"/><rect x="6" y="23" width="1" height="1"/><rect x="7" y="23" width="1" height="1"/><rect x="8" y="23" width="1" height="1"/><rect x="12" y="23" width="1" height="1"/><rect x="14" y="23" width="1" height="1"/><rect x="15" y="23" width="1" height="1"/><rect x="18" y="23" width="1" height="1"/><rect x="21" y="23" width="1" height="1"/><rect x="22" y="23" width="1" height="1"/><rect x="23" y="23" width="1" height="1"/><rect x="24" y="23" width="1" height="1"/><rect x="25" y="23" width="1" height="1"/><rect x="28" y="23" width="1" height="1"/><rect x="29" y="23" width="1" height="1"/><rect x="30" y="23" width="1" height="1"/><rect x="32" y="23" width="1" height="1"/><rect x="33" y="23" width="1" height="1"/><rect x="34" y="23" width="1" height="1"/><rect x="0" y="24" width="1" height="1"/><rect x="1" y="24" width="1" height="1"/><rect x="2" y="24" width="1" height="1"/><rect x="5" y="24" width="1" height="1"/><rect x="6" y="24" width="1" height="1"/><rect x="8" y="24" width="1" height="1"/><rect x="9" y="24" width="1" height="1"/><rect x="10" y="24" width="1" height="1"/><rect x="12" y="24" width="1" height="1"/><rect x="14" y="24" width="1" height="1"/><rect x="15" y="24" width="1" height="1"/><rect x="18" y="24" width="1" height="1"/><rect x="19" y="24" width="1" height="1"/><rect x="21" y="24" width="1" height="1"/><rect x="22" y="24" width="1" height="1"/><rect x="24" y="24" width="1" height="1"/><rect x="26" y="24" width="1" height="1"/><rect x="28" y="24" width="1" height="1"/><rect x="29" y="24" width="1" height="1"/><rect x="30" y="24" width="1" height="1"/><rect x="34" y="24" width="1" height="1"/><rect x="36" y="24" width="1" height="1"/><rect x="1" y="25" width="1" height="1"/><rect x="2" y="25" width="1" height="1"/><rect x="5" y="25" width="1" height="1"/><rect x="6" y="25" width="1" height="1"/><rect x="9" y="25" width="1" height="1"/><rect x="10" y="25" width="1" height="1"/><rect x="13" y="25" width="1" height="1"/><rect x="14" y="25" width="1" height="1"/><rect x="16" y="25" width="1" height="1"/><rect x="20" y="25" width="1" height="1"/><rect x="22" y="25" width="1" height="1"/><rect x="23" y="25" width="1" height="1"/><rect x="26" y="25" width="1" height="1"/><rect x="27" y="25" width="1" height="1"/><rect x="28" y="25" width="1" height="1"/><rect x="30" y="25" width="1" height="1"/><rect x="31" y="25" width="1" height="1"/><rect x="32" y="25" width="1" height="1"/><rect x="35" y="25" width="1" height="1"/><rect x="1" y="26" width="1" height="1"/><rect x="3" y="26" width="1" height="1"/><rect x="7" y="26" width="1" height="1"/><rect x="8" y="26" width="1" height="1"/><rect x="10" y="26" width="1" height="1"/><rect x="12" y="26" width="1" height="1"/><rect x="13" y="26" width="1" height="1"/><rect x="14" y="26" width="1" height="1"/><rect x="16" y="26" width="1" height="1"/><rect x="17" y="26" width="1" height="1"/><rect x="20" y="26" width="1" height="1"/><rect x="21" y="26" width="1" height="1"/><rect x="22" y="26" width="1" height="1"/><rect x="23" y="26" width="1" height="1"/><rect x="24" y="26" width="1" height="1"/><rect x="25" y="26" width="1" height="1"/><rect x="26" y="26" width="1" height="1"/><rect x="27" y="26" width="1" height="1"/><rect x="29" y="26" width="1" height="1"/><rect x="31" y="26" width="1" height="1"/><rect x="35" y="26" width="1" height="1"/><rect x="0" y="27" width="1" height="1"/><rect x="2" y="27" width="1" height="1"/><rect x="7" y="27" width="1" height="1"/><rect x="9" y="27" width="1" height="1"/><rect x="12" y="27" width="1" height="1"/><rect x="15" y="27" width="1" height="1"/><rect x="16" y="27" width="1" height="1"/><rect x="18" y="27" width="1" height="1"/><rect x="20" y="27" width="1" height="1"/><rect x="22" y="27" width="1" height="1"/><rect x="25" y="27" width="1" height="1"/><rect x="26" y="27" width="1" height="1"/><rect x="28" y="27" width="1" height="1"/><rect x="29" y="27" width="1" height="1"/><rect x="30" y="27" width="1" height="1"/><rect x="31" y="27" width="1" height="1"/><rect x="35" y="27" width="1" height="1"/><rect x="0" y="28" width="1" height="1"/><rect x="3" y="28" width="1" height="1"/><rect x="8" y="28" width="1" height="1"/><rect x="11" y="28" width="1" height="1"/><rect x="13" y="28" width="1" height="1"/><rect x="16" y="28" width="1" height="1"/><rect x="18" y="28" width="1" height="1"/><rect x="19" y="28" width="1" height="1"/><rect x="21" y="28" width="1" height="1"/><rect x="23" y="28" width="1" height="1"/><rect x="28" y="28" width="1" height="1"/><rect x="29" y="28" width="1" height="1"/><rect x="30" y="28" width="1" height="1"/><rect x="31" y="28" width="1" height="1"/><rect x="33" y="28" width="1" height="1"/><rect x="36" y="28" width="1" height="1"/><rect x="10" y="29" width="1" height="1"/><rect x="12" y="29" width="1" height="1"/><rect x="13" y="29" width="1" height="1"/><rect x="15" y="29" width="1" height="1"/><rect x="16" y="29" width="1" height="1"/><rect x="17" y="29" width="1" height="1"/><rect x="21" y="29" width="1" height="1"/><rect x="22" y="29" width="1" height="1"/><rect x="23" y="29" width="1" height="1"/><rect x="26" y="29" width="1" height="1"/><rect x="28" y="29" width="1" height="1"/><rect x="31" y="29" width="1" height="1"/><rect x="33" y="29" width="1" height="1"/><rect x="35" y="29" width="1" height="1"/><rect x="36" y="29" width="1" height="1"/><rect x="0" y="30" width="1" height="1"/><rect x="1" y="30" width="1" height="1"/><rect x="2" y="30" width="1" height="1"/><rect x="3" y="30" width="1" height="1"/><rect x="4" y="30" width="1" height="1"/><rect x="5" y="30" width="1" height="1"/><rect x="6" y="30" width="1" height="1"/><rect x="11" y="30" width="1" height="1"/><rect x="12" y="30" width="1" height="1"/><rect x="13" y="30" width="1" height="1"/><rect x="14" y="30" width="1" height="1"/><rect x="18" y="30" width="1" height="1"/><rect x="21" y="30" width="1" height="1"/><rect x="23" y="30" width="1" height="1"/><rect x="24" y="30" width="1" height="1"/><rect x="25" y="30" width="1" height="1"/><rect x="26" y="30" width="1" height="1"/><rect x="27" y="30" width="1" height="1"/><rect x="28" y="30" width="1" height="1"/><rect x="33" y="30" width="1" height="1"/><rect x="35" y="30" width="1" height="1"/><rect x="0" y="31" width="1" height="1"/><rect x="6" y="31" width="1" height="1"/><rect x="8" y="31" width="1" height="1"/><rect x="12" y="31" width="1" height="1"/><rect x="14" y="31" width="1" height="1"/><rect x="15" y="31" width="1" height="1"/><rect x="21" y="31" width="1" height="1"/><rect x="25" y="31" width="1" height="1"/><rect x="28" y="31" width="1" height="1"/><rect x="29" y="31" width="1" height="1"/><rect x="31" y="31" width="1" height="1"/><rect x="33" y="31" width="1" height="1"/><rect x="34" y="31" width="1" height="1"/><rect x="35" y="31" width="1" height="1"/><rect x="0" y="32" width="1" height="1"/><rect x="2" y="32" width="1" height="1"/><rect x="3" y="32" width="1" height="1"/><rect x="4" y="32" width="1" height="1"/><rect x="6" y="32" width="1" height="1"/><rect x="8" y="32" width="1" height="1"/><rect x="10" y="32" width="1" height="1"/><rect x="14" y="32" width="1" height="1"/><rect x="18" y="32" width="1" height="1"/><rect x="19" y="32" width="1" height="1"/><rect x="20" y="32" width="1" height="1"/><rect x="21" y="32" width="1" height="1"/><rect x="27" y="32" width="1" height="1"/><rect x="28" y="32" width="1" height="1"/><rect x="29" y="32" width="1" height="1"/><rect x="31" y="32" width="1" height="1"/><rect x="32" y="32" width="1" height="1"/><rect x="33" y="32" width="1" height="1"/><rect x="34" y="32" width="1" height="1"/><rect x="35" y="32" width="1" height="1"/><rect x="36" y="32" width="1" height="1"/><rect x="0" y="33" width="1" height="1"/><rect x="2" y="33" width="1" height="1"/><rect x="3" y="33" width="1" height="1"/><rect x="4" y="33" width="1" height="1"/><rect x="6" y="33" width="1" height="1"/><rect x="8" y="33" width="1" height="1"/><rect x="9" y="33" width="1" height="1"/><rect x="11" y="33" width="1" height="1"/><rect x="14" y="33" width="1" height="1"/><rect x="16" y="33" width="1" height="1"/><rect x="18" y="33" width="1" height="1"/><rect x="19" y="33" width="1" height="1"/><rect x="20" y="33" width="1" height="1"/><rect x="23" y="33" width="1" height="1"/><rect x="24" y="33" width="1" height="1"/><rect x="25" y="33" width="1" height="1"/><rect x="27" y="33" width="1" height="1"/><rect x="28" y="33" width="1" height="1"/><rect x="29" y="33" width="1" height="1"/><rect x="31" y="33" width="1" height="1"/><rect x="33" y="33" width="1" height="1"/><rect x="34" y="33" width="1" height="1"/><rect x="36" y="33" width="1" height="1"/><rect x="0" y="34" width="1" height="1"/><rect x="2" y="34" width="1" height="1"/><rect x="3" y="34" width="1" height="1"/><rect x="4" y="34" width="1" height="1"/><rect x="6" y="34" width="1" height="1"/><rect x="8" y="34" width="1" height="1"/><rect x="9" y="34" width="1" height="1"/><rect x="11" y="34" width="1" height="1"/><rect x="13" y="34" width="1" height="1"/><rect x="14" y="34" width="1" height="1"/><rect x="15" y="34" width="1" height="1"/><rect x="18" y="34" width="1" height="1"/><rect x="20" y="34" width="1" height="1"/><rect x="21" y="34" width="1" height="1"/><rect x="26" y="34" width="1" height="1"/><rect x="27" y="34" width="1" height="1"/><rect x="28" y="34" width="1" height="1"/><rect x="32" y="34" width="1" height="1"/><rect x="33" y="34" width="1" height="1"/><rect x="36" y="34" width="1" height="1"/><rect x="0" y="35" width="1" height="1"/><rect x="6" y="35" width="1" height="1"/><rect x="8" y="35" width="1" height="1"/><rect x="9" y="35" width="1" height="1"/><rect x="10" y="35" width="1" height="1"/><rect x="12" y="35" width="1" height="1"/><rect x="13" y="35" width="1" height="1"/><rect x="14" y="35" width="1" height="1"/><rect x="17" y="35" width="1" height="1"/><rect x="19" y="35" width="1" height="1"/><rect x="20" y="35" width="1" height="1"/><rect x="24" y="35" width="1" height="1"/><rect x="25" y="35" width="1" height="1"/><rect x="27" y="35" width="1" height="1"/><rect x="28" y="35" width="1" height="1"/><rect x="29" y="35" width="1" height="1"/><rect x="30" y="35" width="1" height="1"/><rect x="31" y="35" width="1" height="1"/><rect x="36" y="35" width="1" height="1"/><rect x="0" y="36" width="1" height="1"/><rect x="1" y="36" width="1" height="1"/><rect x="2" y="36" width="1" height="1"/><rect x="3" y="36" width="1" height="1"/><rect x="4" y="36" width="1" height="1"/><rect x="5" y="36" width="1" height="1"/><rect x="6" y="36" width="1" height="1"/><rect x="8" y="36" width="1" height="1"/><rect x="9" y="36" width="1" height="1"/><rect x="17" y="36" width="1" height="1"/><rect x="18" y="36" width="1" height="1"/><rect x="20" y="36" width="1" height="1"/><rect x="21" y="36" width="1" height="1"/><rect x="25" y="36" width="1" height="1"/><rect x="26" y="36" width="1" height="1"/><rect x="27" y="36" width="1" height="1"/><rect x="29" y="36" width="1" height="1"/><rect x="32" y="36" width="1" height="1"/><rect x="35" y="36" width="1" height="1"/><rect x="36" y="36" width="1" height="1"/></g><g transform="translate(18.6,21.7) scale(0.1242)" shape-rendering="crispEdges"><rect x="0" y="0.0" width="50" height="50.6" fill="rgb(90,90,90)"/><rect x="49" y="0.0" width="50" height="50.6" fill="rgb(60,60,60)"/><rect x="98" y="0.0" width="50" height="50.6" fill="rgb(150,150,150)"/><rect x="147" y="0.0" width="50" height="50.6" fill="rgb(200,200,200)"/><rect x="196" y="0.0" width="50" height="50.6" fill="rgb(130,130,130)"/><rect x="245" y="0.0" width="50" height="50.6" fill="rgb(110,110,110)"/><rect x="294" y="0.0" width="50" height="50.6" fill="rgb(130,130,130)"/><rect x="343" y="0.0" width="50" height="50.6" fill="rgb(200,200,200)"/><rect x="392" y="0.0" width="50" height="50.6" fill="rgb(160,160,160)"/><rect x="441" y="0.0" width="50" height="50.6" fill="rgb(90,90,90)"/><rect x="490" y="0.0" width="50" height="50.6" fill="rgb(225,225,225)"/><rect x="539" y="0.0" width="50" height="50.6" fill="rgb(185,185,185)"/><rect x="588" y="0.0" width="50" height="50.6" fill="rgb(200,200,200)"/><rect x="0" y="49.6" width="50" height="50.6" fill="rgb(130,130,130)"/><rect x="49" y="49.6" width="50" height="50.6" fill="rgb(185,185,185)"/><rect x="98" y="49.6" width="50" height="50.6" fill="rgb(200,200,200)"/><rect x="147" y="49.6" width="50" height="50.6" fill="rgb(60,60,60)"/><rect x="196" y="49.6" width="50" height="50.6" fill="rgb(160,160,160)"/><rect x="245" y="49.6" width="50" height="50.6" fill="rgb(200,200,200)"/><rect x="294" y="49.6" width="50" height="50.6" fill="rgb(160,160,160)"/><rect x="343" y="49.6" width="50" height="50.6" fill="rgb(170,170,170)"/><rect x="392" y="49.6" width="50" height="50.6" fill="rgb(185,185,185)"/><rect x="441" y="49.6" width="50" height="50.6" fill="rgb(130,130,130)"/><rect x="490" y="49.6" width="50" height="50.6" fill="rgb(110,110,110)"/><rect x="539" y="49.6" width="50" height="50.6" fill="rgb(170,170,170)"/><rect x="588" y="49.6" width="50" height="50.6" fill="rgb(200,200,200)"/><rect x="0" y="99.2" width="50" height="50.6" fill="rgb(90,90,90)"/><rect x="49" y="99.2" width="50" height="50.6" fill="rgb(225,225,225)"/><rect x="98" y="99.2" width="50" height="50.6" fill="rgb(160,160,160)"/><rect x="147" y="99.2" width="50" height="50.6" fill="rgb(60,60,60)"/><rect x="196" y="99.2" width="50" height="50.6" fill="rgb(150,150,150)"/><rect x="245" y="99.2" width="50" height="50.6" fill="rgb(150,150,150)"/><rect x="294" y="99.2" width="50" height="50.6" fill="rgb(170,170,170)"/><rect x="343" y="99.2" width="50" height="50.6" fill="rgb(170,170,170)"/><rect x="392" y="99.2" width="50" height="50.6" fill="rgb(60,60,60)"/><rect x="441" y="99.2" width="50" height="50.6" fill="rgb(60,60,60)"/><rect x="490" y="99.2" width="50" height="50.6" fill="rgb(90,90,90)"/><rect x="539" y="99.2" width="50" height="50.6" fill="rgb(170,170,170)"/><rect x="588" y="99.2" width="50" height="50.6" fill="rgb(170,170,170)"/><rect x="0" y="148.8" width="50" height="50.6" fill="rgb(160,160,160)"/><rect x="49" y="148.8" width="50" height="50.6" fill="rgb(225,225,225)"/><rect x="98" y="148.8" width="50" height="50.6" fill="rgb(150,150,150)"/><rect x="147" y="148.8" width="50" height="50.6" fill="rgb(90,90,90)"/><rect x="196" y="148.8" width="50" height="50.6" fill="rgb(130,130,130)"/><rect x="245" y="148.8" width="50" height="50.6" fill="rgb(150,150,150)"/><rect x="294" y="148.8" width="50" height="50.6" fill="rgb(170,170,170)"/><rect x="343" y="148.8" width="50" height="50.6" fill="rgb(200,200,200)"/><rect x="392" y="148.8" width="50" height="50.6" fill="rgb(130,130,130)"/><rect x="441" y="148.8" width="50" height="50.6" fill="rgb(170,170,170)"/><rect x="490" y="148.8" width="50" height="50.6" fill="rgb(185,185,185)"/><rect x="539" y="148.8" width="50" height="50.6" fill="rgb(130,130,130)"/><rect x="588" y="148.8" width="50" height="50.6" fill="rgb(110,110,110)"/><rect x="0" y="198.4" width="50" height="50.6" fill="rgb(110,110,110)"/><rect x="49" y="198.4" width="50" height="50.6" fill="rgb(90,90,90)"/><rect x="98" y="198.4" width="50" height="50.6" fill="rgb(130,130,130)"/><rect x="147" y="198.4" width="50" height="50.6" fill="rgb(185,185,185)"/><rect x="196" y="198.4" width="50" height="50.6" fill="rgb(200,200,200)"/><rect x="245" y="198.4" width="50" height="50.6" fill="rgb(130,130,130)"/><rect x="294" y="198.4" width="50" height="50.6" fill="rgb(110,110,110)"/><rect x="343" y="198.4" width="50" height="50.6" fill="rgb(160,160,160)"/><rect x="392" y="198.4" width="50" height="50.6" fill="rgb(170,170,170)"/><rect x="441" y="198.4" width="50" height="50.6" fill="rgb(185,185,185)"/><rect x="490" y="198.4" width="50" height="50.6" fill="rgb(150,150,150)"/><rect x="539" y="198.4" width="50" height="50.6" fill="rgb(200,200,200)"/><rect x="588" y="198.4" width="50" height="50.6" fill="rgb(110,110,110)"/><rect x="0" y="248.0" width="50" height="50.6" fill="rgb(185,185,185)"/><rect x="49" y="248.0" width="50" height="50.6" fill="rgb(160,160,160)"/><rect x="98" y="248.0" width="50" height="50.6" fill="rgb(130,130,130)"/><rect x="147" y="248.0" width="50" height="50.6" fill="rgb(150,150,150)"/><rect x="196" y="248.0" width="50" height="50.6" fill="rgb(170,170,170)"/><rect x="245" y="248.0" width="50" height="50.6" fill="rgb(150,150,150)"/><rect x="294" y="248.0" width="50" height="50.6" fill="rgb(170,170,170)"/><rect x="343" y="248.0" width="50" height="50.6" fill="rgb(110,110,110)"/><rect x="392" y="248.0" width="50" height="50.6" fill="rgb(185,185,185)"/><rect x="441" y="248.0" width="50" height="50.6" fill="rgb(60,60,60)"/><rect x="490" y="248.0" width="50" height="50.6" fill="rgb(150,150,150)"/><rect x="539" y="248.0" width="50" height="50.6" fill="rgb(160,160,160)"/><rect x="588" y="248.0" width="50" height="50.6" fill="rgb(130,130,130)"/><rect x="0" y="297.6" width="50" height="50.6" fill="rgb(150,150,150)"/><rect x="49" y="297.6" width="50" height="50.6" fill="rgb(160,160,160)"/><rect x="98" y="297.6" width="50" height="50.6" fill="rgb(185,185,185)"/><rect x="147" y="297.6" width="50" height="50.6" fill="rgb(185,185,185)"/><rect x="196" y="297.6" width="50" height="50.6" fill="rgb(170,170,170)"/><rect x="245" y="297.6" width="50" height="50.6" fill="rgb(225,225,225)"/><rect x="294" y="297.6" width="50" height="50.6" fill="rgb(90,90,90)"/><rect x="343" y="297.6" width="50" height="50.6" fill="rgb(160,160,160)"/><rect x="392" y="297.6" width="50" height="50.6" fill="rgb(110,110,110)"/><rect x="441" y="297.6" width="50" height="50.6" fill="rgb(150,150,150)"/><rect x="490" y="297.6" width="50" height="50.6" fill="rgb(170,170,170)"/><rect x="539" y="297.6" width="50" height="50.6" fill="rgb(60,60,60)"/><rect x="588" y="297.6" width="50" height="50.6" fill="rgb(90,90,90)"/><rect x="0" y="347.2" width="50" height="50.6" fill="rgb(225,225,225)"/><rect x="49" y="347.2" width="50" height="50.6" fill="rgb(160,160,160)"/><rect x="98" y="347.2" width="50" height="50.6" fill="rgb(110,110,110)"/><rect x="147" y="347.2" width="50" height="50.6" fill="rgb(200,200,200)"/><rect x="196" y="347.2" width="50" height="50.6" fill="rgb(160,160,160)"/><rect x="245" y="347.2" width="50" height="50.6" fill="rgb(225,225,225)"/><rect x="294" y="347.2" width="50" height="50.6" fill="rgb(60,60,60)"/><rect x="343" y="347.2" width="50" height="50.6" fill="rgb(60,60,60)"/><rect x="392" y="347.2" width="50" height="50.6" fill="rgb(130,130,130)"/><rect x="441" y="347.2" width="50" height="50.6" fill="rgb(90,90,90)"/><rect x="490" y="347.2" width="50" height="50.6" fill="rgb(150,150,150)"/><rect x="539" y="347.2" width="50" height="50.6" fill="rgb(150,150,150)"/><rect x="588" y="347.2" width="50" height="50.6" fill="rgb(225,225,225)"/><rect x="0" y="396.8" width="50" height="50.6" fill="rgb(90,90,90)"/><rect x="49" y="396.8" width="50" height="50.6" fill="rgb(225,225,225)"/><rect x="98" y="396.8" width="50" height="50.6" fill="rgb(110,110,110)"/><rect x="147" y="396.8" width="50" height="50.6" fill="rgb(130,130,130)"/><rect x="196" y="396.8" width="50" height="50.6" fill="rgb(110,110,110)"/><rect x="245" y="396.8" width="50" height="50.6" fill="rgb(185,185,185)"/><rect x="294" y="396.8" width="50" height="50.6" fill="rgb(160,160,160)"/><rect x="343" y="396.8" width="50" height="50.6" fill="rgb(110,110,110)"/><rect x="392" y="396.8" width="50" height="50.6" fill="rgb(130,130,130)"/><rect x="441" y="396.8" width="50" height="50.6" fill="rgb(170,170,170)"/><rect x="490" y="396.8" width="50" height="50.6" fill="rgb(200,200,200)"/><rect x="539" y="396.8" width="50" height="50.6" fill="rgb(110,110,110)"/><rect x="588" y="396.8" width="50" height="50.6" fill="rgb(225,225,225)"/><rect x="0" y="446.40000000000003" width="50" height="50.6" fill="rgb(225,225,225)"/><rect x="49" y="446.40000000000003" width="50" height="50.6" fill="rgb(90,90,90)"/><rect x="98" y="446.40000000000003" width="50" height="50.6" fill="rgb(200,200,200)"/><rect x="147" y="446.40000000000003" width="50" height="50.6" fill="rgb(150,150,150)"/><rect x="196" y="446.40000000000003" width="50" height="50.6" fill="rgb(130,130,130)"/><rect x="245" y="446.40000000000003" width="50" height="50.6" fill="rgb(185,185,185)"/><rect x="294" y="446.40000000000003" width="50" height="50.6" fill="rgb(130,130,130)"/><rect x="343" y="446.40000000000003" width="50" height="50.6" fill="rgb(200,200,200)"/><rect x="392" y="446.40000000000003" width="50" height="50.6" fill="rgb(90,90,90)"/><rect x="441" y="446.40000000000003" width="50" height="50.6" fill="rgb(185,185,185)"/><rect x="490" y="446.40000000000003" width="50" height="50.6" fill="rgb(90,90,90)"/><rect x="539" y="446.40000000000003" width="50" height="50.6" fill="rgb(200,200,200)"/><rect x="588" y="446.40000000000003" width="50" height="50.6" fill="rgb(90,90,90)"/><rect x="0" y="496.0" width="50" height="50.6" fill="rgb(150,150,150)"/><rect x="49" y="496.0" width="50" height="50.6" fill="rgb(170,170,170)"/><rect x="98" y="496.0" width="50" height="50.6" fill="rgb(130,130,130)"/><rect x="147" y="496.0" width="50" height="50.6" fill="rgb(110,110,110)"/><rect x="196" y="496.0" width="50" height="50.6" fill="rgb(185,185,185)"/><rect x="245" y="496.0" width="50" height="50.6" fill="rgb(185,185,185)"/><rect x="294" y="496.0" width="50" height="50.6" fill="rgb(200,200,200)"/><rect x="343" y="496.0" width="50" height="50.6" fill="rgb(60,60,60)"/><rect x="392" y="496.0" width="50" height="50.6" fill="rgb(185,185,185)"/><rect x="441" y="496.0" width="50" height="50.6" fill="rgb(185,185,185)"/><rect x="490" y="496.0" width="50" height="50.6" fill="rgb(110,110,110)"/><rect x="539" y="496.0" width="50" height="50.6" fill="rgb(185,185,185)"/><rect x="588" y="496.0" width="50" height="50.6" fill="rgb(130,130,130)"/><rect x="0" y="545.6" width="50" height="50.6" fill="rgb(185,185,185)"/><rect x="49" y="545.6" width="50" height="50.6" fill="rgb(110,110,110)"/><rect x="98" y="545.6" width="50" height="50.6" fill="rgb(200,200,200)"/><rect x="147" y="545.6" width="50" height="50.6" fill="rgb(225,225,225)"/><rect x="196" y="545.6" width="50" height="50.6" fill="rgb(60,60,60)"/><rect x="245" y="545.6" width="50" height="50.6" fill="rgb(110,110,110)"/><rect x="294" y="545.6" width="50" height="50.6" fill="rgb(160,160,160)"/><rect x="343" y="545.6" width="50" height="50.6" fill="rgb(185,185,185)"/><rect x="392" y="545.6" width="50" height="50.6" fill="rgb(225,225,225)"/><rect x="441" y="545.6" width="50" height="50.6" fill="rgb(185,185,185)"/><rect x="490" y="545.6" width="50" height="50.6" fill="rgb(150,150,150)"/><rect x="539" y="545.6" width="50" height="50.6" fill="rgb(185,185,185)"/><rect x="588" y="545.6" width="50" height="50.6" fill="rgb(160,160,160)"/></g></svg>
<div class="t" style="left:637.16px;top:935.90px;font-size:14.2px;color:#fff;transform:scaleX(0.8560);">TF</div>
<svg class="r" style="left:652.8px;top:936.6px;" width="242" height="12.3" viewBox="0 0 242 12.3"><rect x="0.00" y="0.00" width="6.1" height="6.2" fill="rgb(82,77,72)"/><rect x="6.05" y="0.00" width="6.1" height="6.2" fill="rgb(87,93,99)"/><rect x="12.10" y="0.00" width="6.1" height="6.2" fill="rgb(64,61,58)"/><rect x="18.15" y="0.00" width="6.1" height="6.2" fill="rgb(82,90,98)"/><rect x="24.20" y="0.00" width="6.1" height="6.2" fill="rgb(44,51,58)"/><rect x="30.25" y="0.00" width="6.1" height="6.2" fill="rgb(95,93,91)"/><rect x="36.30" y="0.00" width="6.1" height="6.2" fill="rgb(64,56,48)"/><rect x="42.35" y="0.00" width="6.1" height="6.2" fill="rgb(87,80,73)"/><rect x="48.40" y="0.00" width="6.1" height="6.2" fill="rgb(94,98,102)"/><rect x="54.45" y="0.00" width="6.1" height="6.2" fill="rgb(50,52,54)"/><rect x="60.50" y="0.00" width="6.1" height="6.2" fill="rgb(100,95,90)"/><rect x="66.55" y="0.00" width="6.1" height="6.2" fill="rgb(86,90,94)"/><rect x="72.60" y="0.00" width="6.1" height="6.2" fill="rgb(66,71,76)"/><rect x="78.65" y="0.00" width="6.1" height="6.2" fill="rgb(95,92,89)"/><rect x="84.70" y="0.00" width="6.1" height="6.2" fill="rgb(78,71,64)"/><rect x="90.75" y="0.00" width="6.1" height="6.2" fill="rgb(107,99,91)"/><rect x="96.80" y="0.00" width="6.1" height="6.2" fill="rgb(83,85,87)"/><rect x="102.85" y="0.00" width="6.1" height="6.2" fill="rgb(73,68,63)"/><rect x="108.90" y="0.00" width="6.1" height="6.2" fill="rgb(76,71,66)"/><rect x="114.95" y="0.00" width="6.1" height="6.2" fill="rgb(59,66,73)"/><rect x="121.00" y="0.00" width="6.1" height="6.2" fill="rgb(69,68,67)"/><rect x="127.05" y="0.00" width="6.1" height="6.2" fill="rgb(79,72,65)"/><rect x="133.10" y="0.00" width="6.1" height="6.2" fill="rgb(77,75,73)"/><rect x="139.15" y="0.00" width="6.1" height="6.2" fill="rgb(82,82,82)"/><rect x="145.20" y="0.00" width="6.1" height="6.2" fill="rgb(85,82,79)"/><rect x="151.25" y="0.00" width="6.1" height="6.2" fill="rgb(70,63,56)"/><rect x="157.30" y="0.00" width="6.1" height="6.2" fill="rgb(95,100,105)"/><rect x="163.35" y="0.00" width="6.1" height="6.2" fill="rgb(69,71,73)"/><rect x="169.40" y="0.00" width="6.1" height="6.2" fill="rgb(71,70,69)"/><rect x="175.45" y="0.00" width="6.1" height="6.2" fill="rgb(52,58,64)"/><rect x="181.50" y="0.00" width="6.1" height="6.2" fill="rgb(93,100,107)"/><rect x="187.55" y="0.00" width="6.1" height="6.2" fill="rgb(79,75,71)"/><rect x="193.60" y="0.00" width="6.1" height="6.2" fill="rgb(77,84,91)"/><rect x="199.65" y="0.00" width="6.1" height="6.2" fill="rgb(76,75,74)"/><rect x="205.70" y="0.00" width="6.1" height="6.2" fill="rgb(48,56,64)"/><rect x="211.75" y="0.00" width="6.1" height="6.2" fill="rgb(50,52,54)"/><rect x="217.80" y="0.00" width="6.1" height="6.2" fill="rgb(73,80,87)"/><rect x="223.85" y="0.00" width="6.1" height="6.2" fill="rgb(108,100,92)"/><rect x="229.90" y="0.00" width="6.1" height="6.2" fill="rgb(88,84,80)"/><rect x="235.95" y="0.00" width="6.1" height="6.2" fill="rgb(85,89,93)"/><rect x="0.00" y="6.15" width="6.1" height="6.2" fill="rgb(108,110,112)"/><rect x="6.05" y="6.15" width="6.1" height="6.2" fill="rgb(111,105,99)"/><rect x="12.10" y="6.15" width="6.1" height="6.2" fill="rgb(117,122,127)"/><rect x="18.15" y="6.15" width="6.1" height="6.2" fill="rgb(116,123,130)"/><rect x="24.20" y="6.15" width="6.1" height="6.2" fill="rgb(148,153,158)"/><rect x="30.25" y="6.15" width="6.1" height="6.2" fill="rgb(104,101,98)"/><rect x="36.30" y="6.15" width="6.1" height="6.2" fill="rgb(118,117,116)"/><rect x="42.35" y="6.15" width="6.1" height="6.2" fill="rgb(171,171,171)"/><rect x="48.40" y="6.15" width="6.1" height="6.2" fill="rgb(135,138,141)"/><rect x="54.45" y="6.15" width="6.1" height="6.2" fill="rgb(146,153,160)"/><rect x="60.50" y="6.15" width="6.1" height="6.2" fill="rgb(132,140,148)"/><rect x="66.55" y="6.15" width="6.1" height="6.2" fill="rgb(148,155,162)"/><rect x="72.60" y="6.15" width="6.1" height="6.2" fill="rgb(171,163,155)"/><rect x="78.65" y="6.15" width="6.1" height="6.2" fill="rgb(100,105,110)"/><rect x="84.70" y="6.15" width="6.1" height="6.2" fill="rgb(157,153,149)"/><rect x="90.75" y="6.15" width="6.1" height="6.2" fill="rgb(151,157,163)"/><rect x="96.80" y="6.15" width="6.1" height="6.2" fill="rgb(105,101,97)"/><rect x="102.85" y="6.15" width="6.1" height="6.2" fill="rgb(171,175,179)"/><rect x="108.90" y="6.15" width="6.1" height="6.2" fill="rgb(165,160,155)"/><rect x="114.95" y="6.15" width="6.1" height="6.2" fill="rgb(165,170,175)"/><rect x="121.00" y="6.15" width="6.1" height="6.2" fill="rgb(117,110,103)"/><rect x="127.05" y="6.15" width="6.1" height="6.2" fill="rgb(123,127,131)"/><rect x="133.10" y="6.15" width="6.1" height="6.2" fill="rgb(106,101,96)"/><rect x="139.15" y="6.15" width="6.1" height="6.2" fill="rgb(92,100,108)"/><rect x="145.20" y="6.15" width="6.1" height="6.2" fill="rgb(109,115,121)"/><rect x="151.25" y="6.15" width="6.1" height="6.2" fill="rgb(122,127,132)"/><rect x="157.30" y="6.15" width="6.1" height="6.2" fill="rgb(123,116,109)"/><rect x="163.35" y="6.15" width="6.1" height="6.2" fill="rgb(102,102,102)"/><rect x="169.40" y="6.15" width="6.1" height="6.2" fill="rgb(171,172,173)"/><rect x="175.45" y="6.15" width="6.1" height="6.2" fill="rgb(154,157,160)"/><rect x="181.50" y="6.15" width="6.1" height="6.2" fill="rgb(109,106,103)"/><rect x="187.55" y="6.15" width="6.1" height="6.2" fill="rgb(112,118,124)"/><rect x="193.60" y="6.15" width="6.1" height="6.2" fill="rgb(144,137,130)"/><rect x="199.65" y="6.15" width="6.1" height="6.2" fill="rgb(158,158,158)"/><rect x="205.70" y="6.15" width="6.1" height="6.2" fill="rgb(99,106,113)"/><rect x="211.75" y="6.15" width="6.1" height="6.2" fill="rgb(94,101,108)"/><rect x="217.80" y="6.15" width="6.1" height="6.2" fill="rgb(95,101,107)"/><rect x="223.85" y="6.15" width="6.1" height="6.2" fill="rgb(150,149,148)"/><rect x="229.90" y="6.15" width="6.1" height="6.2" fill="rgb(136,139,142)"/><rect x="235.95" y="6.15" width="6.1" height="6.2" fill="rgb(155,162,169)"/></svg>
<div class="t" style="left:894.02px;top:935.90px;font-size:14.2px;color:#fff;transform:scaleX(0.8663);">Hh</div>
<div class="r" style="left:1001px;top:930px;width:64px;height:28px;background:#f5ad1f;border-radius:14px;"></div>
<div class="t" style="left:1012.80px;top:936.90px;font-size:14.2px;color:#fff;transform:scaleX(0.9925);">COPY</div>
<div class="r" style="left:1093px;top:764px;width:460px;height:240px;background:#232323;border-radius:14px;"></div>
<div class="t" style="left:1108.86px;top:784.00px;font-size:14.8px;color:#fff;font-weight:700;transform:scaleX(0.9745);">Tag(Memo)</div>
<div class="r" style="left:1109px;top:807px;width:428px;height:130px;background:#1f1f1f;border-radius:15px;"></div>
<div class="r" style="left:1258px;top:807px;width:130px;height:130px;background:#d9d9d9;border-radius:0px;"></div>
<div class="t" style="left:1291.87px;top:864.60px;font-size:14.2px;color:#f7f7f7;">NO DATA</div>
<div class="r" style="left:1473px;top:943px;width:64px;height:28px;background:#f5ad1f;border-radius:14px;"></div>
<div class="t" style="left:1484.80px;top:949.90px;font-size:14.2px;color:#fff;transform:scaleX(0.9925);">COPY</div>
</body></html>
